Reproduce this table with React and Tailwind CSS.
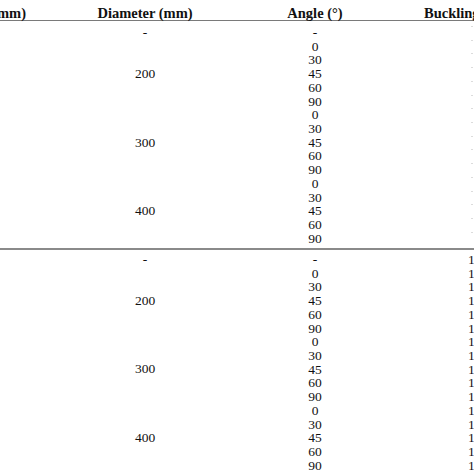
import React from "react";

const angles = ["-", "0", "30", "45", "60", "90", "0", "30", "45", "60", "90", "0", "30", "45", "60", "90"];
const loadsB = ["152.4", "148.6", "147.9", "146.3", "145.1", "144.8", "150.2", "149.7", "147.5", "146.2", "145.9", "151.3", "150.1", "148.8", "147.6", "146.4"];

function Section({ top }) {
  return (
    <div className="flex w-[700px]">
      <div className="w-[26px] shrink-0" />
      <div className="w-[238px] shrink-0 flex flex-col text-center">
        <div className="h-[13.73px] leading-[13.73px]">-</div>
        {["200", "300", "400"].map((d) => (
          <div key={d} className="h-[68.65px] flex items-center justify-center">{d}</div>
        ))}
      </div>
      <div className="w-[102px] shrink-0 flex flex-col text-center">
        {angles.map((a, i) => (
          <div key={i} className="h-[13.73px] leading-[13.73px]">{a}</div>
        ))}
      </div>
      <div className="w-[300px] shrink-0 flex flex-col">
        {angles.map((a, i) =>
          top ? (
            <div key={i} className="h-[13.73px] pl-[105px]">
              <div className="w-[2px] h-[1px] bg-[#dcdcdc]" />
            </div>
          ) : (
            <div key={i} className="h-[13.73px] leading-[13.73px] pl-[102px] whitespace-nowrap">{loadsB[i]}</div>
          )
        )}
      </div>
    </div>
  );
}

export default function App() {
  return (
    <div
      className="w-[474px] h-[474px] overflow-hidden bg-white text-[#111] text-[13.5px]"
      style={{ fontFamily: "'Liberation Serif', serif" }}
    >
      <div className="flex w-[700px] h-[20px] pt-[6px] font-bold text-[14.5px] leading-[14px] whitespace-nowrap">
        <div className="w-[26px] shrink-0 flex justify-end">Length (mm)</div>
        <div className="w-[238px] shrink-0 text-center">Diameter (mm)</div>
        <div className="w-[102px] shrink-0 text-center">Angle (°)</div>
        <div className="w-[300px] shrink-0 pl-[58px]">Buckling Load (kN)</div>
      </div>
      <div className="h-[1px] bg-[#7a7a7a]" />
      <div className="pt-[5px]">
        <Section top />
      </div>
      <div className="h-[2px] mt-[2.3px] bg-[#8a8a8a]" />
      <div className="pt-[3px]">
        <Section />
      </div>
    </div>
  );
}
